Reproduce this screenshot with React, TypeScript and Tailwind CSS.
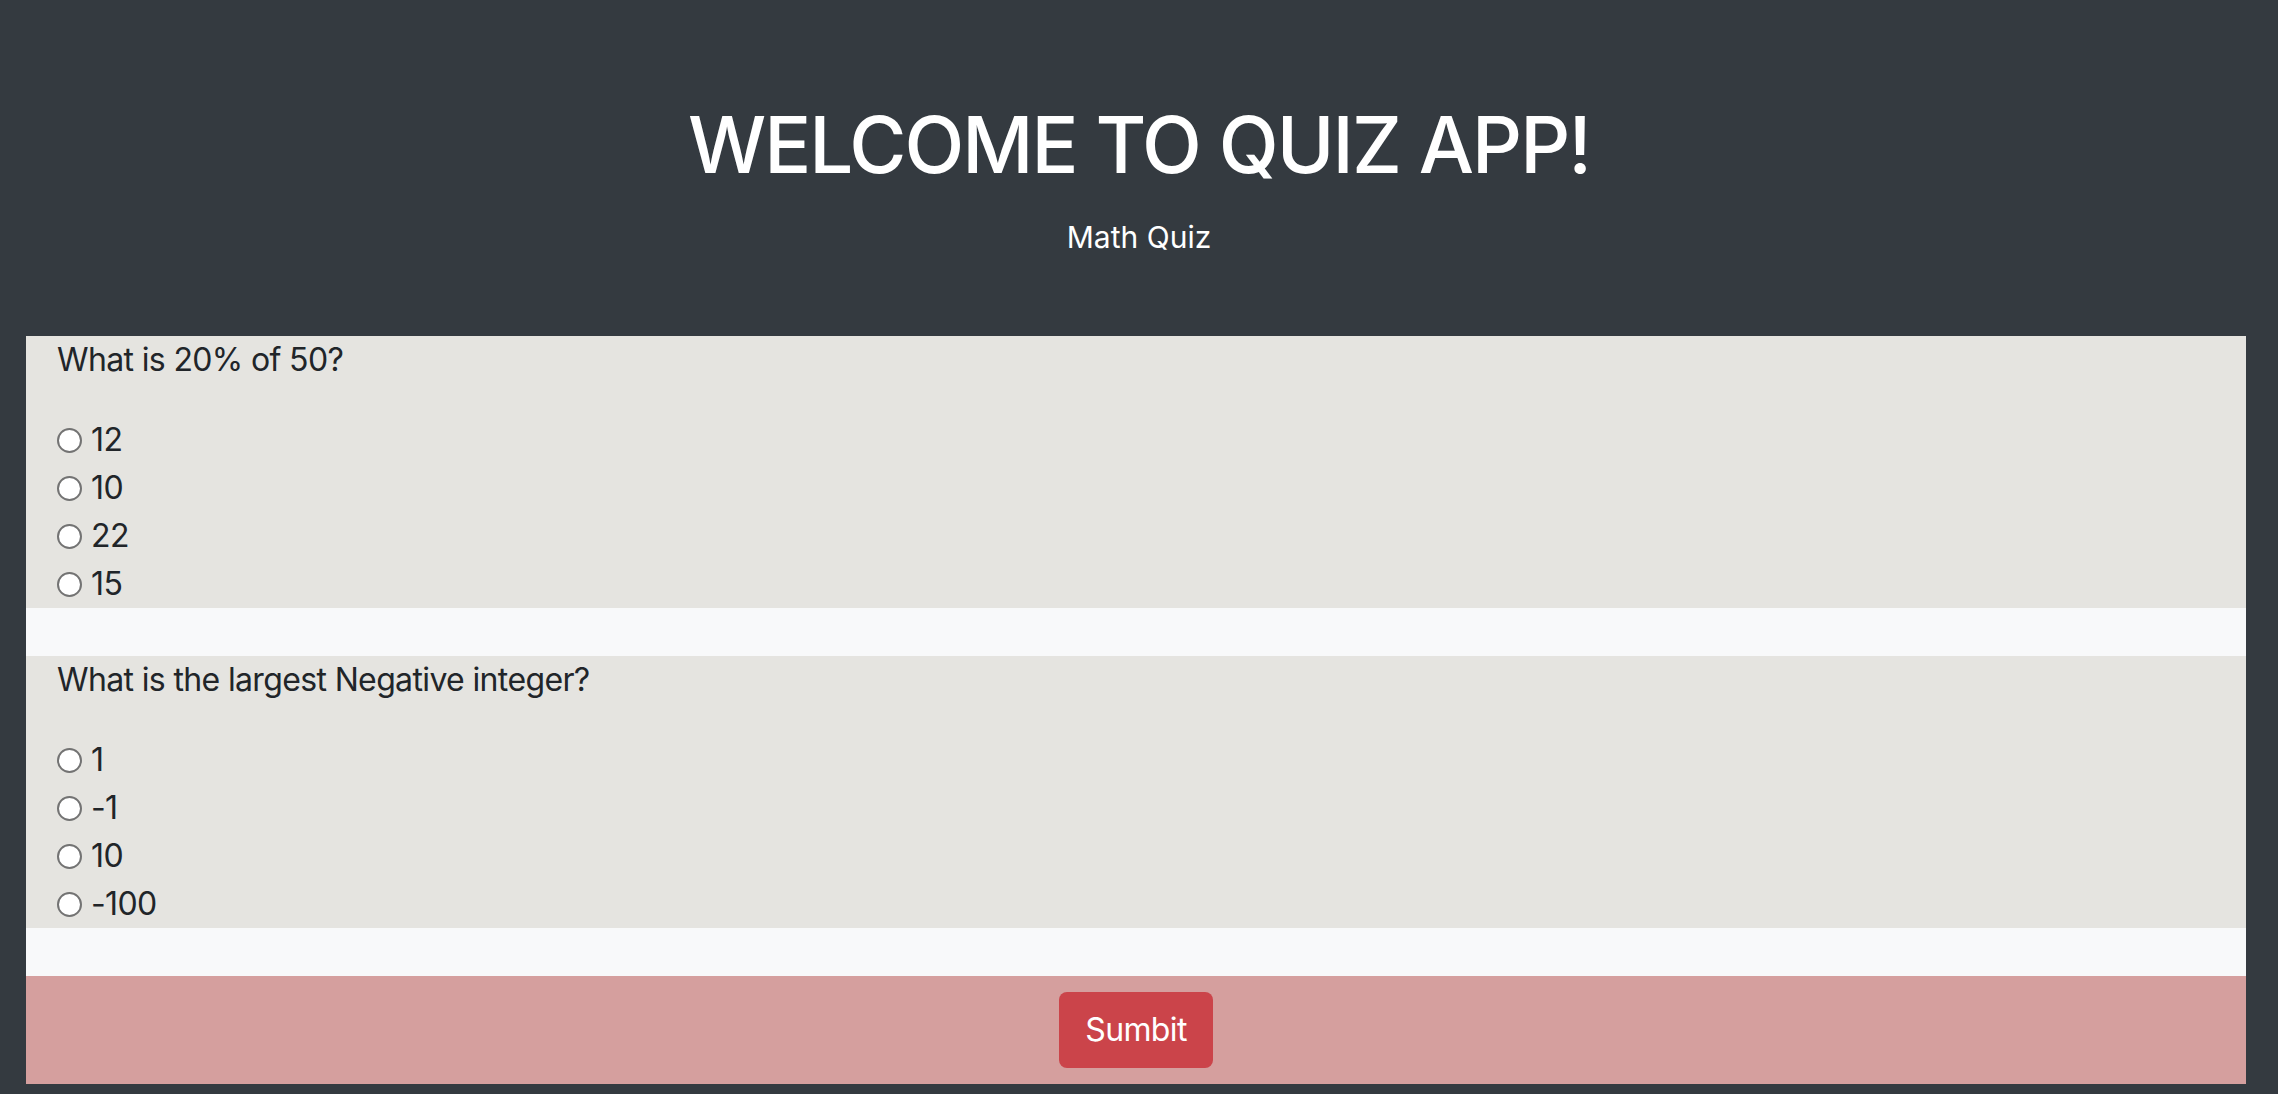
import React, { useState } from 'react'

type Question = {
  id: string
  text: string
  options: string[]
}

const questions: Question[] = [
  { id: 'q1', text: 'What is 20% of 50?', options: ['12', '10', '22', '15'] },
  { id: 'q2', text: 'What is the largest Negative integer?', options: ['1', '-1', '10', '-100'] },
]

const QuestionBlock = ({
  q,
  value,
  onPick,
}: {
  q: Question
  value: string | undefined
  onPick: (v: string) => void
}) => {
  return (
    <>
      <div className="bg-[#e5e4e0] px-[31px] text-[#212529]">
        <div className="flex h-[48px] items-center text-[32px] tracking-[-0.02em]">{q.text}</div>
        <div className="mt-[32px] flex flex-col">
          {q.options.map((opt) => (
            <label key={opt} className="flex h-[48px] cursor-pointer items-center gap-[9px] text-[32px] tracking-[-0.02em]">
              <input
                type="radio"
                name={q.id}
                value={opt}
                checked={value === opt}
                onChange={() => onPick(opt)}
                className="m-0 h-[25px] w-[25px] shrink-0 appearance-none rounded-full border-2 border-[#737373] bg-white checked:border-[7px] checked:border-[#0d6efd]"
              />
              <span>{opt}</span>
            </label>
          ))}
        </div>
      </div>
      <div className="h-[48px] bg-[#f8f9fa]" />
    </>
  )
}

const App = () => {
  const [answers, setAnswers] = useState<Record<string, string>>({})

  return (
    <div className="min-h-screen bg-[#343a40] pb-[11px] font-['Inter','Liberation_Sans',sans-serif]">
      <header className="flex h-[336px] flex-col items-center pt-[98px] text-white">
        <h1 className="text-[78px] leading-[94px] font-medium tracking-[-0.025em]">WELCOME TO QUIZ APP!</h1>
        <p className="mt-[27px] text-[30px] leading-[36px]">Math Quiz</p>
      </header>
      <main className="ml-[26px] mr-[32px]">
        {questions.map((q) => (
          <QuestionBlock
            key={q.id}
            q={q}
            value={answers[q.id]}
            onPick={(v) => setAnswers({ ...answers, [q.id]: v })}
          />
        ))}
        <div className="flex justify-center bg-[#d59f9e] pt-[16px] pb-[16px]">
          <button className="h-[76px] w-[154px] rounded-[8px] bg-[#cb444a] text-[32px] tracking-[-0.02em] text-white">
            Sumbit
          </button>
        </div>
      </main>
    </div>
  )
}

export default App
